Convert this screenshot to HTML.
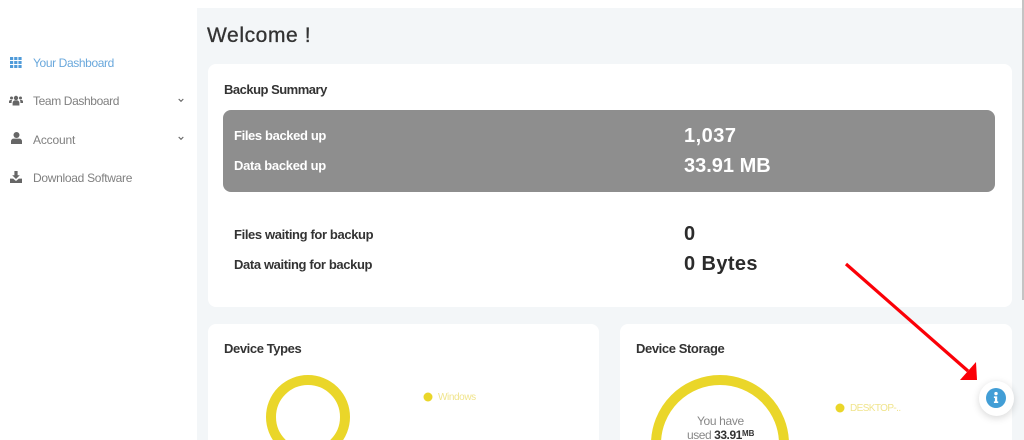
<!DOCTYPE html>
<html><head><meta charset="utf-8"><style>
html,body{margin:0;padding:0;background:#fff;width:1024px;height:440px;overflow:hidden}
body{font-family:"Liberation Sans",sans-serif}
#w{position:absolute;left:0;top:0;width:1024px;height:440px;overflow:hidden;background:#fff}
.t{position:absolute;white-space:nowrap;line-height:1}
.card{position:absolute;background:#fff;border-radius:8px}
svg{position:absolute;overflow:hidden}
.n{font-size:12px;letter-spacing:-.38px;color:#808080}
.b{font-size:13px;font-weight:bold;letter-spacing:-.37px;color:#333}
.v{font-size:20px;font-weight:bold}
</style></head><body><div id="w">
<div style="position:absolute;left:197px;top:8px;width:827px;height:432px;background:#f3f6f8"></div>
<div style="position:absolute;left:1022px;top:0;width:2px;height:300px;background:#c4c4c4"></div>

<svg style="left:10px;top:57px" width="12" height="11" viewBox="0 0 12 11"><g fill="#4f9bd9"><rect x="0" y="0" width="3.2" height="3"/><rect x="4.2" y="0" width="3.2" height="3"/><rect x="8.4" y="0" width="3.2" height="3"/><rect x="0" y="4" width="3.2" height="3"/><rect x="4.2" y="4" width="3.2" height="3"/><rect x="8.4" y="4" width="3.2" height="3"/><rect x="0" y="8" width="3.2" height="3"/><rect x="4.2" y="8" width="3.2" height="3"/><rect x="8.4" y="8" width="3.2" height="3"/></g></svg>
<div class="t n" style="left:33px;top:57px;color:#6aa8dc">Your Dashboard</div>

<svg style="left:9px;top:95px" width="14" height="11" viewBox="0 0 14 11"><g fill="#666"><circle cx="7" cy="3" r="2.2"/><circle cx="2.5" cy="3" r="1.5"/><circle cx="11.5" cy="3" r="1.5"/><path d="M3.6 10.5V8c0-1.6 1.2-2.6 2.4-2.6h2c1.2 0 2.4 1 2.4 2.6v2.5z"/><path d="M0 8V6.6C0 5.6.8 5 1.6 5h1.6c-.4.5-.6 1.2-.6 2v1zM14 8V6.6c0-1-.8-1.6-1.6-1.6h-1.6c.4.5.6 1.2.6 2v1z"/></g></svg>
<div class="t n" style="left:33px;top:95px">Team Dashboard</div>
<svg style="left:178px;top:98px" width="6" height="5" viewBox="0 0 6 5"><path d="M.7 1l2.3 2.3L5.3 1" fill="none" stroke="#666" stroke-width="1.1"/></svg>

<svg style="left:11px;top:132px" width="11" height="12" viewBox="0 0 11 12"><g fill="#666"><circle cx="5.5" cy="3" r="3"/><path d="M0 12V9.3C0 7.6 1.3 6.6 2.6 6.6h5.8c1.3 0 2.6 1 2.6 2.7V12z"/></g></svg>
<div class="t n" style="left:33px;top:134px;letter-spacing:-.18px">Account</div>
<svg style="left:178px;top:136px" width="6" height="5" viewBox="0 0 6 5"><path d="M.7 1l2.3 2.3L5.3 1" fill="none" stroke="#666" stroke-width="1.1"/></svg>

<svg style="left:10px;top:171px" width="12" height="12" viewBox="0 0 12 12"><g fill="#666"><path d="M4.4 0h3.2v4.2h2.2L6 8 2.2 4.2h2.2z"/><path d="M0 7.6h3.2L6 10l2.8-2.4H12V12H0z"/></g></svg>
<div class="t n" style="left:33px;top:172px;letter-spacing:-.29px">Download Software</div>

<div class="t" style="left:207px;top:25px;font-size:21px;color:#333;letter-spacing:.6px;-webkit-text-stroke:.3px #333">Welcome !</div>

<div class="card" style="left:208px;top:64px;width:804px;height:243px"></div>
<div class="t b" style="left:224px;top:83px;letter-spacing:-.5px">Backup Summary</div>
<div style="position:absolute;left:223px;top:110px;width:772px;height:82px;background:#8e8e8e;border-radius:8px"></div>
<div class="t b" style="left:234px;top:129px;color:#fff">Files backed up</div>
<div class="t b" style="left:234px;top:159px;color:#fff;letter-spacing:-.3px">Data backed up</div>
<div class="t v" style="left:684px;top:126px;color:#fff;letter-spacing:.5px">1,037</div>
<div class="t v" style="left:684px;top:156px;color:#fff">33.91 MB</div>
<div class="t b" style="left:234px;top:228px">Files waiting for backup</div>
<div class="t b" style="left:234px;top:258px">Data waiting for backup</div>
<div class="t v" style="left:684px;top:224px;color:#2b2b2b">0</div>
<div class="t v" style="left:684px;top:254px;color:#2b2b2b;letter-spacing:.4px">0 Bytes</div>

<div class="card" style="left:208px;top:324px;width:391px;height:116px;border-radius:8px 8px 0 0"></div>
<div class="t b" style="left:224px;top:342px;letter-spacing:-.4px">Device Types</div>
<svg style="left:0;top:0" width="1024" height="440"><circle cx="308" cy="417" r="37" fill="none" stroke="#ead629" stroke-width="10"/><circle cx="428" cy="397" r="4.5" fill="#ead629"/></svg>
<div class="t" style="left:438px;top:393px;font-size:10px;color:#f0e48c;letter-spacing:-.4px">Windows</div>

<div class="card" style="left:620px;top:324px;width:392px;height:116px;border-radius:8px 8px 0 0"></div>
<div class="t b" style="left:636px;top:342px;letter-spacing:-.4px">Device Storage</div>
<svg style="left:0;top:0" width="1024" height="440"><circle cx="720" cy="444" r="64" fill="none" stroke="#ead629" stroke-width="10"/><circle cx="840" cy="408" r="4.5" fill="#ead629"/></svg>
<div class="t" style="left:850px;top:404px;font-size:10px;color:#f0e48c;letter-spacing:-.6px">DESKTOP-..</div>
<div class="t" style="left:697px;top:415px;font-size:12px;color:#888;letter-spacing:-.35px">You have</div>
<div class="t" style="left:687px;top:428px;height:12px;overflow:hidden;font-size:12px;line-height:15px;color:#888;letter-spacing:-.45px">used <b style="color:#333">33.91</b></div>
<div class="t" style="left:742px;top:430px;font-size:8px;font-weight:bold;color:#333">MB</div>

<svg style="left:0;top:0" width="1024" height="440">
<line x1="846" y1="264" x2="968" y2="371" stroke="#fb0007" stroke-width="3.2"/>
<polygon points="976,362 977,380 960,380" fill="#fb0007"/>
</svg>

<div style="position:absolute;left:979px;top:381px;width:35px;height:35px;border-radius:50%;background:#fff;box-shadow:0 2px 8px rgba(0,0,0,.16)"></div>
<svg style="left:986px;top:388px" width="20" height="20" viewBox="0 0 20 20"><circle cx="10" cy="10" r="10" fill="#429ed6"/><circle cx="10" cy="5.6" r="1.7" fill="#fff"/><path d="M7.9 8.4h3.3v5h1v1.6H7.9v-1.6h1v-3.4h-1z" fill="#fff"/></svg>
</div></body></html>
